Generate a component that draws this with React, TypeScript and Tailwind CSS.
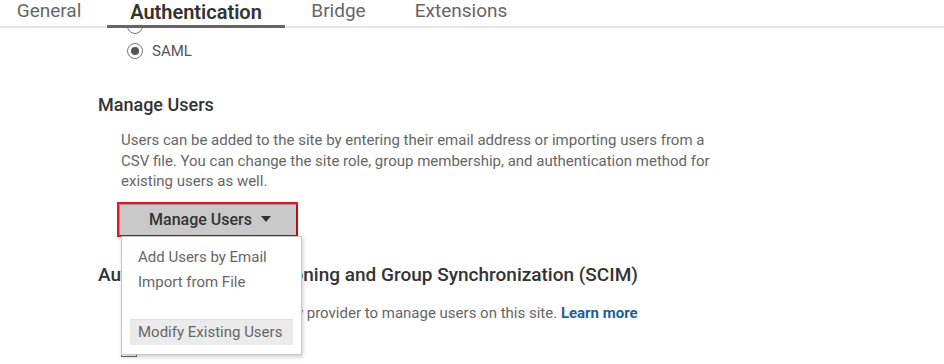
import React from 'react';

const tabs = [
  { label: 'General', w: 'w-[116px]' },
  { label: 'Authentication', w: 'w-[178px]' },
  { label: 'Bridge', w: 'w-[107px]' },
  { label: 'Extensions', w: 'w-[138px]' },
];

const font = { fontFamily: 'Roboto, "Liberation Sans", sans-serif' };

export default function App() {
  return (
    <div className="w-[944px] h-[364px] overflow-hidden bg-white text-[#333]" style={font}>
      {/* tab bar */}
      <div className="flex h-[28px] border-b-2 border-[#e6e6e6] -ml-[9px]">
        {tabs.map((t) => {
          const active = t.label === 'Authentication';
          return (
            <div
              key={t.label}
              className={`${t.w} shrink-0 h-[28px] -mb-[2px] pb-[2px] flex items-center justify-center border-b-[3px] ${
                active ? 'border-[#666] text-[20px] font-semibold text-[#333]' : 'border-transparent text-[19px] text-[#666]'
              }`}
            >
              {t.label}
            </div>
          );
        })}
      </div>

      {/* scrolled content */}
      <div className="relative h-[336px] overflow-hidden">
        <div className="pl-[127px] -mt-[10px] flex flex-col gap-[9px]">
          <div className="flex items-center h-[16px]">
            <span className="w-[16px] h-[16px] rounded-full border border-[#777] bg-white" />
          </div>
          <div className="flex items-center gap-[9px] h-[16px]">
            <span className="w-[16px] h-[16px] rounded-full border border-[#777] bg-white flex items-center justify-center">
              <span className="w-[8px] h-[8px] rounded-full bg-[#555]" />
            </span>
            <span className="text-[15px] text-[#555]">SAML</span>
          </div>
        </div>

        <div className="pl-[98px] pt-[34px]">
          <h2 className="text-[18px] font-medium text-[#333] leading-[24px]">Manage Users</h2>
          <p className="ml-[23px] mt-[13px] w-[610px] text-[15px] leading-[20.5px] text-[#666]">
            Users can be added to the site by entering their email address or importing users from a CSV file. You
            can change the site role, group membership, and authentication method for existing users as well.
          </p>

          <div className="relative ml-[19px] mt-[10px] w-[181px]">
            <div className="border-[2px] border-[#e8141b] h-[35px]">
              <button className="w-full h-full bg-[#c9c9c9] border-t border-l border-[#9a9a9a] shadow-[2px_2px_2px_rgba(0,0,0,0.25)] flex items-center justify-center gap-[9px] pl-[4px] text-[16px] font-medium text-[#333]">
                Manage Users
                <svg width="10" height="7" viewBox="0 0 10 7">
                  <path d="M0 0 L10 0 L5 6 Z" fill="#333" />
                </svg>
              </button>
            </div>

            {/* dropdown menu */}
            <div className="absolute left-[4px] top-[34px] z-10 w-[181px] bg-white border border-[#c8c8c8] shadow-[1px_2px_4px_rgba(0,0,0,0.2)] px-[8px] pt-[8px] pb-[9px]">
              <div className="px-[8px] h-[25px] flex items-center text-[15px] text-[#666]">Add Users by Email</div>
              <div className="px-[8px] h-[25px] flex items-center text-[15px] text-[#666]">Import from File</div>
              <div className="h-[26px] flex items-center">
                <div className="w-full h-px bg-[#e0e0e0] mt-[24px]" />
              </div>
              <div className="mt-[-1px] px-[8px] h-[25px] flex items-center bg-[#ebebeb] text-[15px] text-[#666]">
                Modify Existing Users
              </div>
            </div>
          </div>

          <h2 className="mt-[26px] text-[19px] font-medium text-[#333] leading-[24px]">
            Automatic User Provisioning and Group Synchronization (SCIM)
          </h2>
          <p className="ml-[23px] mt-[16px] text-[15px] leading-[20px] text-[#666]">
            Use SCIM with your identity provider to manage users on this site.{' '}
            <span className="font-bold text-[#1f5f94]">Learn more</span>
          </p>
          <div className="ml-[23px] mt-[18px] w-[16px] h-[16px] border border-[#666] bg-white" />
        </div>
      </div>
    </div>
  );
}
